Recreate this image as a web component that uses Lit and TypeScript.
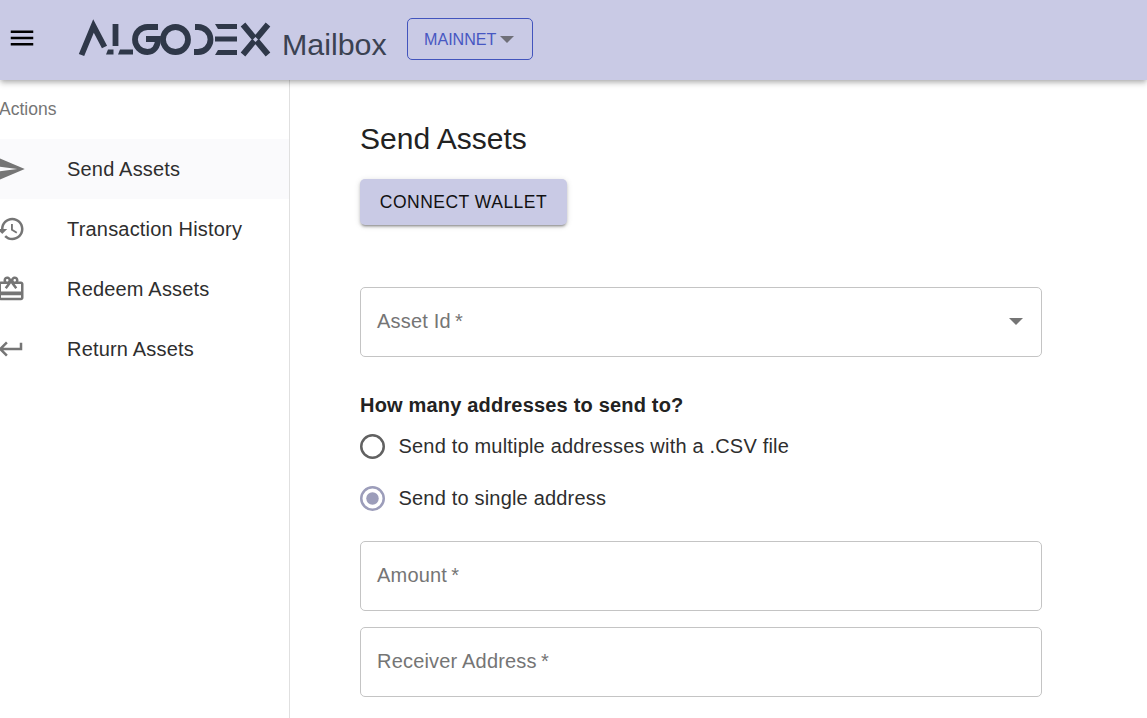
import { LitElement, html, css, svg } from "lit";
import { customElement } from "lit/decorators.js";

const icon = (d: string) => html`<svg class="nav-icon" viewBox="0 0 24 24" aria-hidden="true"><path d=${d}></path></svg>`;

const NAV = [
  { label: "Send Assets", selected: true, d: "M2.01 21 23 12 2.01 3 2 10l15 2-15 2z" },
  { label: "Transaction History", selected: false, d: "M13 3c-4.97 0-9 4.03-9 9H1l3.89 3.89.07.14L9 12H6c0-3.87 3.13-7 7-7s7 3.13 7 7-3.13 7-7 7c-1.93 0-3.68-.79-4.94-2.06l-1.42 1.42C8.27 19.99 10.51 21 13 21c4.97 0 9-4.03 9-9s-4.03-9-9-9zm-1 5v5l4.28 2.54.72-1.21-3.5-2.08V8H12z" },
  { label: "Redeem Assets", selected: false, d: "M20 6h-2.18c.11-.31.18-.65.18-1 0-1.66-1.34-3-3-3-1.05 0-1.96.54-2.5 1.35l-.5.67-.5-.68C10.96 2.54 10.05 2 9 2 7.34 2 6 3.34 6 5c0 .35.07.69.18 1H4c-1.11 0-1.99.89-1.99 2L2 19c0 1.11.89 2 2 2h16c1.11 0 2-.89 2-2V8c0-1.11-.89-2-2-2zm-5-2c.55 0 1 .45 1 1s-.45 1-1 1-1-.45-1-1 .45-1 1-1zM9 4c.55 0 1 .45 1 1s-.45 1-1 1-1-.45-1-1 .45-1 1-1zm11 15H4v-2h16v2zm0-5H4V8h5.08L7 10.83 8.62 12 11 8.76l1-1.36 1 1.36L15.38 12 17 10.83 14.92 8H20v6z" },
  { label: "Return Assets", selected: false, d: "M19 7v4H5.83l3.58-3.59L8 6l-6 6 6 6 1.41-1.41L5.83 13H21V7z" },
];

const logo = svg`
  <g fill="none" stroke="#2f3849" stroke-width="5.800">
    <path d="M81.500 55 93.500 26 104.500 47"></path>
    <path d="M115.500 24V46"></path>
    <path d="M158 27H147.500a12.500 12.500 0 0 0 0 25c6 0 10.500-5 10.500-13H146"></path>
    <circle cx="175.500" cy="39.500" r="12.500"></circle>
    <path d="M195 27H198a12.500 12.500 0 0 1 0 25H194"></path>
    <path d="M243 24.500 268 54.500M268 24.500 243 54.500" stroke-width="6"></path>
  </g>
  <g fill="#2f3849">
    <path d="M108 49.500h5.500v5H106z"></path>
    <path d="M120 49.500h13v5h-15z"></path>
    <path d="M215 24h22v5h-19z"></path>
    <path d="M215 36.500h22v5h-22z"></path>
    <path d="M218 50h19v5h-22z"></path>
  </g>
  <path d="M255.500 37l2.500 2.500-2.500 2.500-2.500-2.500z" fill="#c9cae5"></path>
`;

@customElement("app-root")
export class AppRoot extends LitElement {
  static styles = css`
    :host {
      display: flex;
      flex-direction: column;
      width: 1147px;
      height: 718px;
      overflow: hidden;
      background: #fff;
      font-family: "Liberation Sans", Arial, sans-serif;
      font-size: 20px;
      letter-spacing: 0.1875px;
      color: #2e2e2e;
    }
    .bar {
      flex: none;
      position: relative;
      z-index: 2;
      display: flex;
      align-items: center;
      height: 80px;
      background: #c9cae5;
      box-shadow: 0 2px 5px -1px rgba(0, 0, 0, 0.25), 0 4px 6px 0 rgba(0, 0, 0, 0.14);
    }
    .menu {
      flex: none;
      width: 30px;
      height: 30px;
      margin: -4px 0 0 7px;
      fill: #000;
    }
    .logo {
      flex: none;
      width: 200px;
      height: 40px;
      margin: -4px 0 0 39px;
    }
    .brand {
      flex: none;
      width: 105px;
      margin: 8px 0 0 6px;
      font-size: 30.4px;
      letter-spacing: 0;
      line-height: 36px;
      color: #3b4252;
    }
    .network {
      display: flex;
      align-items: center;
      box-sizing: border-box;
      width: 126px;
      height: 42px;
      margin: -2px 0 0 20px;
      padding-left: 16px;
      border: 1px solid #4254bd;
      border-radius: 5px;
      font-size: 16.1px;
      letter-spacing: 0;
      color: #4757c2;
    }
    .network i {
      margin: 0 0 0 4px;
      border-left: 7.5px solid transparent;
      border-right: 7.5px solid transparent;
      border-top: 7.5px solid #6f6f78;
    }
    .body {
      flex: 1;
      display: flex;
      min-height: 0;
    }
    .side {
      flex: none;
      box-sizing: border-box;
      width: 290px;
      border-right: 1px solid #e0e0e0;
      overflow: hidden;
    }
    .side-title {
      height: 59px;
      line-height: 58px;
      margin-left: -1px;
      font-size: 17.5px;
      letter-spacing: 0;
      color: #757575;
    }
    .item {
      display: flex;
      align-items: center;
      height: 60px;
    }
    .item.selected {
      background: #fafafc;
    }
    .nav-icon {
      flex: none;
      width: 30px;
      height: 30px;
      margin: 0 41px 0 -4px;
      fill: #757575;
    }
    .main {
      flex: none;
      width: 682px;
      margin-left: 70px;
    }
    h1 {
      margin: 41px 0 0;
      font-size: 30px;
      font-weight: 400;
      line-height: 36px;
      letter-spacing: 0;
      color: #222;
    }
    .connect {
      display: block;
      box-sizing: border-box;
      width: 207px;
      height: 46px;
      margin: 22px 0 0;
      padding: 0;
      border: 0;
      border-radius: 5px;
      background: #c9cae5;
      box-shadow: 0 3px 2px -2px rgba(0, 0, 0, 0.25), 0 2px 3px 0 rgba(0, 0, 0, 0.18), 0 1px 6px 0 rgba(0, 0, 0, 0.12);
      font: inherit;
      font-size: 17.5px;
      letter-spacing: 0.5px;
      color: #111;
    }
    .field {
      display: flex;
      align-items: center;
      justify-content: space-between;
      box-sizing: border-box;
      height: 70px;
      padding: 0 16px 2px;
      border: 1px solid #c4c4c4;
      border-radius: 5px;
      color: #757575;
    }
    .asset {
      margin-top: 62px;
    }
    .asset i {
      margin-right: 2px;
      border-left: 7px solid transparent;
      border-right: 7px solid transparent;
      border-top: 7px solid #757575;
    }
    .question {
      margin: 36px 0 0;
      font-size: 20px;
      font-weight: 700;
      line-height: 24px;
      color: #222;
    }
    .radio {
      display: flex;
      align-items: center;
      gap: 14px;
      height: 52px;
      margin-left: -0.5px;
    }
    .radios {
      margin: 3px 0 17px;
    }
    .radio svg {
      flex: none;
      width: 25px;
      height: 25px;
    }
    .amount {
      margin-bottom: 16px;
    }
  `;

  render() {
    return html`
      <header class="bar">
        <svg class="menu" viewBox="0 0 24 24" aria-hidden="true"><path d="M3 18h18v-2H3v2zm0-5h18v-2H3v2zm0-7v2h18V6H3z"></path></svg>
        <svg class="logo" viewBox="76 18 200 40" role="img" aria-label="Algodex logo">${logo}</svg>
        <span class="brand">Mailbox</span>
        <div class="network">MAINNET<i></i></div>
      </header>
      <div class="body">
        <nav class="side">
          <div class="side-title">Actions</div>
          ${NAV.map(
            (n) => html`<div class="item ${n.selected ? "selected" : ""}">${icon(n.d)}<span>${n.label}</span></div>`
          )}
        </nav>
        <main class="main">
          <h1>Send Assets</h1>
          <button class="connect">CONNECT WALLET</button>
          <div class="field asset"><span>Asset Id\u2009*</span><i></i></div>
          <p class="question">How many addresses to send to?</p>
          <div class="radios">
            <label class="radio">
              <svg viewBox="0 0 25 25" aria-hidden="true"><circle cx="12.500" cy="12.500" r="11.250" fill="none" stroke="#616161" stroke-width="2.500"></circle></svg>
              <span>Send to multiple addresses with a .CSV file</span>
            </label>
            <label class="radio">
              <svg viewBox="0 0 25 25" aria-hidden="true"><circle cx="12.500" cy="12.500" r="11.250" fill="none" stroke="#9c9dba" stroke-width="2.500"></circle><circle cx="12.500" cy="12.500" r="6.250" fill="#9c9dba"></circle></svg>
              <span>Send to single address</span>
            </label>
          </div>
          <div class="field amount"><span>Amount\u2009*</span></div>
          <div class="field"><span>Receiver Address\u2009*</span></div>
        </main>
      </div>
    `;
  }
}
